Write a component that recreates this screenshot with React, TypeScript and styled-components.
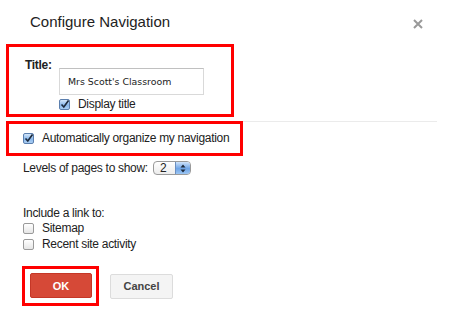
import styled, { createGlobalStyle } from 'styled-components';

const GlobalStyle = createGlobalStyle`
  html, body {
    margin: 0;
    padding: 0;
    background: #ffffff;
  }
  body {
    font-family: "Liberation Sans", Arial, sans-serif;
    color: #222222;
  }
`;

const Dialog = styled.div`
  width: 466px;
  height: 315px;
  box-sizing: border-box;
  display: flex;
  flex-direction: column;
  background: #ffffff;
  overflow: hidden;
`;

const Header = styled.div`
  height: 44px;
  display: flex;
  align-items: flex-start;
  justify-content: space-between;
  padding: 12px 43px 0 30px;
  box-sizing: border-box;
`;

const Heading = styled.h1`
  margin: 0;
  font-size: 15px;
  line-height: 20px;
  font-weight: normal;
  color: #222222;
`;

const Close = styled.button`
  margin-top: 7px;
  width: 10px;
  height: 10px;
  padding: 0;
  border: none;
  background: transparent;
  display: flex;
  cursor: pointer;
`;

const Highlight = styled.div<{ w: number; h: number }>`
  position: relative;
  margin-left: 6px;
  width: ${(p) => p.w}px;
  height: ${(p) => p.h}px;
  box-sizing: border-box;
  border: 3px solid #ff0000;
`;

const TitleBox = styled(Highlight)`
  display: flex;
  padding: 11px 0 0 16px;
`;

const FieldLabel = styled.label`
  width: 34px;
  font-size: 12px;
  letter-spacing: -0.3px;
  line-height: 15px;
  font-weight: bold;
`;

const FieldColumn = styled.div`
  margin-top: 10px;
  display: flex;
  flex-direction: column;
  gap: 2px;
`;

const TextInput = styled.input`
  width: 145px;
  height: 27px;
  box-sizing: border-box;
  border: 1px solid #d9d9d9;
  border-top-color: #c0c0c0;
  padding: 0 0 0 8px;
  font-family: "DejaVu Sans", Verdana, sans-serif;
  font-size: 9.4px;
  color: #222222;
  outline: none;
`;

const CheckRow = styled.label`
  display: flex;
  align-items: center;
  gap: 8px;
  height: 15px;
  font-size: 12px;
  letter-spacing: -0.3px;
  line-height: 15px;
  white-space: nowrap;
`;

const Box = styled.span<{ checked?: boolean }>`
  width: 11px;
  height: 11px;
  box-sizing: border-box;
  border-radius: 2px;
  flex: none;
  display: flex;
  align-items: center;
  justify-content: center;
  border: 1px solid ${(p) => (p.checked ? '#5b7fae' : '#9a9a9a')};
  background: ${(p) =>
    p.checked
      ? 'linear-gradient(#d4e6fa, #8ab7ea 55%, #a9cdf3)'
      : 'linear-gradient(#ffffff, #e6e6e6)'};
`;

const Separator = styled.div`
  margin: 4px 29px 0 22px;
  height: 1px;
  background: #ebebeb;
`;

const AutoBox = styled(Highlight)`
  margin-top: -1px;
  display: flex;
  align-items: center;
  padding-left: 14px;
`;

const Body = styled.div`
  padding-left: 23px;
  display: flex;
  flex-direction: column;
`;

const LevelsRow = styled.div`
  margin-top: 4px;
  display: flex;
  align-items: center;
  gap: 5px;
  font-size: 12px;
  letter-spacing: -0.3px;
  line-height: 16px;
`;

const Select = styled.div`
  width: 38px;
  height: 14px;
  box-sizing: border-box;
  border: 1px solid #9a9a9a;
  border-radius: 4px;
  display: flex;
  overflow: hidden;
  background: linear-gradient(#ffffff, #ececec);
  font-size: 12px;
  letter-spacing: 0;
  line-height: 12px;
`;

const SelectValue = styled.span`
  flex: 1;
  padding-left: 6px;
`;

const SelectArrows = styled.span`
  width: 14px;
  display: flex;
  align-items: center;
  justify-content: center;
  border-left: 1px solid #6b8fc0;
  background: linear-gradient(#cfe3fb, #6ea4e6 55%, #9cc6f3);
`;

const Caption = styled.div`
  margin-top: 29px;
  font-size: 12px;
  letter-spacing: -0.3px;
  line-height: 16px;
`;

const Options = styled.div`
  display: flex;
  flex-direction: column;
  gap: 1px;
`;

const Actions = styled.div`
  margin-top: 14px;
  padding-left: 22px;
  display: flex;
  align-items: center;
  gap: 11px;
`;

const OkFrame = styled.div`
  width: 77px;
  height: 40px;
  box-sizing: border-box;
  border: 3px solid #ff0000;
  padding: 4px 4px 5px 5px;
`;

const Button = styled.button<{ primary?: boolean }>`
  height: 25px;
  width: ${(p) => (p.primary ? '62px' : '63px')};
  box-sizing: border-box;
  border-radius: 2px;
  border: 1px solid ${(p) => (p.primary ? '#c53727' : '#dcdcdc')};
  background: ${(p) => (p.primary ? '#d64937' : '#f4f4f4')};
  color: ${(p) => (p.primary ? '#ffffff' : '#444444')};
  font-family: "Liberation Sans", Arial, sans-serif;
  font-size: 11px;
  font-weight: bold;
  padding: 0;
  cursor: pointer;
`;

const Check = () => (
  <svg width="9" height="9" viewBox="0 0 9 9">
    <path d="M1.5 4.5 L3.8 7 L8.5 0.5" fill="none" stroke="#1d2a3c" strokeWidth="1.6" />
  </svg>
);

export default function App() {
  return (
    <>
      <GlobalStyle />
      <Dialog>
        <Header>
          <Heading>Configure Navigation</Heading>
          <Close aria-label="Close">
            <svg width="10" height="10" viewBox="0 0 10 10">
              <path d="M1 1 L9 9 M9 1 L1 9" stroke="#999999" strokeWidth="2" />
            </svg>
          </Close>
        </Header>

        <TitleBox w={228} h={73}>
          <FieldLabel>Title:</FieldLabel>
          <FieldColumn>
            <TextInput defaultValue="Mrs Scott's Classroom" />
            <CheckRow>
              <Box checked>
                <Check />
              </Box>
              Display title
            </CheckRow>
          </FieldColumn>
        </TitleBox>

        <Separator />

        <AutoBox w={237} h={35}>
          <CheckRow>
            <Box checked>
              <Check />
            </Box>
            Automatically organize my navigation
          </CheckRow>
        </AutoBox>

        <Body>
          <LevelsRow>
            Levels of pages to show:
            <Select>
              <SelectValue>2</SelectValue>
              <SelectArrows>
                <svg width="6" height="9" viewBox="0 0 6 9">
                  <path d="M3 0.5 L5.5 3.5 L0.5 3.5 Z M3 8.5 L5.5 5.5 L0.5 5.5 Z" fill="#1d2a3c" />
                </svg>
              </SelectArrows>
            </Select>
          </LevelsRow>

          <Caption>Include a link to:</Caption>
          <Options>
            <CheckRow>
              <Box />
              Sitemap
            </CheckRow>
            <CheckRow>
              <Box />
              Recent site activity
            </CheckRow>
          </Options>
        </Body>

        <Actions>
          <OkFrame>
            <Button primary>OK</Button>
          </OkFrame>
          <Button>Cancel</Button>
        </Actions>
      </Dialog>
    </>
  );
}
